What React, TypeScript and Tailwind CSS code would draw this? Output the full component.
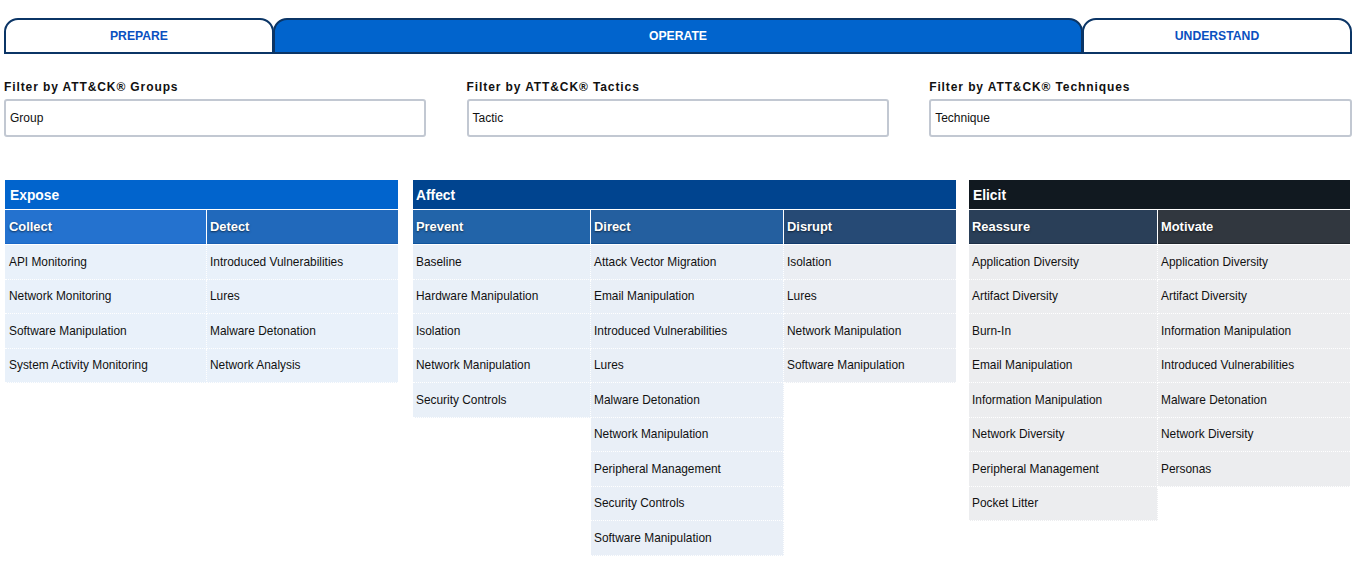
const FONT = "font-['Liberation_Sans',Arial,sans-serif]";

interface Column {
  title: string;
  width: string;
  pad: string;
  head: string;
  edge: string;
  body: string;
  items: string[];
}

interface Group {
  title: string;
  width: string;
  bar: string;
  pad: string;
  gap: string;
  columns: Column[];
}

const groups: Group[] = [
  {
    title: 'Expose',
    width: 'w-[393px]',
    bar: 'bg-[#0164cd]',
    pad: 'pl-[5px]',
    gap: '',
    columns: [
      {
        title: 'Collect',
        width: 'w-[202px]',
        pad: 'pl-1',
        head: 'bg-[#2472cf]',
        edge: 'border-[#1a68c8]',
        body: 'bg-[#e9f1fa]',
        items: ['API Monitoring', 'Network Monitoring', 'Software Manipulation', 'System Activity Monitoring']
      },
      {
        title: 'Detect',
        width: 'w-[191px]',
        pad: 'pl-[3px]',
        head: 'bg-[#2169bb]',
        edge: 'border-[#1b5fb0]',
        body: 'bg-[#e9f1fa]',
        items: ['Introduced Vulnerabilities', 'Lures', 'Malware Detonation', 'Network Analysis']
      }
    ]
  },
  {
    title: 'Affect',
    width: 'w-[543px]',
    bar: 'bg-[#00448f]',
    pad: 'pl-[3px]',
    gap: 'ml-[15px]',
    columns: [
      {
        title: 'Prevent',
        width: 'w-[178px]',
        pad: 'pl-[3px]',
        head: 'bg-[#2264a9]',
        edge: 'border-[#0f549c]',
        body: 'bg-[#e9f0f8]',
        items: ['Baseline', 'Hardware Manipulation', 'Isolation', 'Network Manipulation', 'Security Controls']
      },
      {
        title: 'Direct',
        width: 'w-[193px]',
        pad: 'pl-[3px]',
        head: 'bg-[#245f9f]',
        edge: 'border-[#114f92]',
        body: 'bg-[#e9eff7]',
        items: [
          'Attack Vector Migration',
          'Email Manipulation',
          'Introduced Vulnerabilities',
          'Lures',
          'Malware Detonation',
          'Network Manipulation',
          'Peripheral Management',
          'Security Controls',
          'Software Manipulation'
        ]
      },
      {
        title: 'Disrupt',
        width: 'w-[172px]',
        pad: 'pl-[3px]',
        head: 'bg-[#264a75]',
        edge: 'border-[#123a6c]',
        body: 'bg-[#ebeef3]',
        items: ['Isolation', 'Lures', 'Network Manipulation', 'Software Manipulation']
      }
    ]
  },
  {
    title: 'Elicit',
    width: 'w-[381px]',
    bar: 'bg-[#111920]',
    pad: 'pl-1',
    gap: 'ml-[13px]',
    columns: [
      {
        title: 'Reassure',
        width: 'w-[189px]',
        pad: 'pl-[3px]',
        head: 'bg-[#2a3f58]',
        edge: 'border-[#1d2f46]',
        body: 'bg-[#ecedef]',
        items: [
          'Application Diversity',
          'Artifact Diversity',
          'Burn-In',
          'Email Manipulation',
          'Information Manipulation',
          'Network Diversity',
          'Peripheral Management',
          'Pocket Litter'
        ]
      },
      {
        title: 'Motivate',
        width: 'w-[192px]',
        pad: 'pl-[3px]',
        head: 'bg-[#31373f]',
        edge: 'border-[#20262d]',
        body: 'bg-[#ecedef]',
        items: [
          'Application Diversity',
          'Artifact Diversity',
          'Information Manipulation',
          'Introduced Vulnerabilities',
          'Malware Detonation',
          'Network Diversity',
          'Personas'
        ]
      }
    ]
  }
];

const filters = [
  { label: 'Filter by ATT&CK® Groups', value: 'Group' },
  { label: 'Filter by ATT&CK® Tactics', value: 'Tactic' },
  { label: 'Filter by ATT&CK® Techniques', value: 'Technique' }
];

function Tab({ label, width, active }: { label: string; width: string; active?: boolean }) {
  return (
    <div
      className={`${width} h-9 flex items-center justify-center rounded-t-[14px] border-2 border-[#0b3566] text-[12.2px] font-bold ${
        active ? 'bg-[#0164cd] text-white' : 'bg-white text-[#0a50c0]'
      }`}
    >
      {label}
    </div>
  );
}

function MatrixColumn({ column, last }: { column: Column; last: boolean }) {
  return (
    <div className={`${column.width} shrink-0`}>
      <div className={last ? '' : 'border-r border-white'}>
        <div
          className={`${column.head} ${column.edge} ${column.pad} h-[34px] flex items-center border-b text-[12.9px] font-bold text-white [text-shadow:0_1px_2px_rgba(0,0,0,0.6)]`}
        >
          {column.title}
        </div>
      </div>
      <div className="pt-px">
        {column.items.map((item) => (
          <div
            key={item}
            className={`${column.body} ${column.pad} ${
              last ? '' : 'border-r border-r-white border-dotted'
            } h-[34.5px] flex items-center pt-[1.5px] border-b border-b-white border-dotted text-[11.9px] text-[#111]`}
          >
            {item}
          </div>
        ))}
      </div>
    </div>
  );
}

export default function App() {
  return (
    <div className={`${FONT} w-[1358px] h-[572px] bg-white overflow-hidden pt-[18px]`}>
      <div className="flex px-1">
        <Tab label="PREPARE" width="w-[270px]" />
        <div className="-mx-px">
          <Tab label="OPERATE" width="w-[810px]" active />
        </div>
        <Tab label="UNDERSTAND" width="w-[270px]" />
      </div>

      <div className="flex gap-[40.2px] px-1 mt-[25px]">
        {filters.map((filter) => (
          <div key={filter.value} className="w-[422.4px]">
            <div className="h-4 flex items-center text-xs font-bold tracking-[0.9px] text-[#111]">
              {filter.label}
            </div>
            <div className="mt-[4px] h-[38px] flex items-center pl-1 rounded-[3px] border-2 border-[#c2c8d2] text-xs text-[#111]">
              {filter.value}
            </div>
          </div>
        ))}
      </div>

      <div className="flex pl-[5px] mt-[43px]">
        {groups.map((group) => (
          <div key={group.title} className={`${group.width} ${group.gap} shrink-0`}>
            <div
              className={`${group.bar} ${group.pad} h-[29px] mb-px pt-[3px] flex items-center text-[13.8px] font-bold text-white`}
            >
              {group.title}
            </div>
            <div className="flex">
              {group.columns.map((column, j) => (
                <MatrixColumn key={column.title} column={column} last={j === group.columns.length - 1} />
              ))}
            </div>
          </div>
        ))}
      </div>
    </div>
  );
}
